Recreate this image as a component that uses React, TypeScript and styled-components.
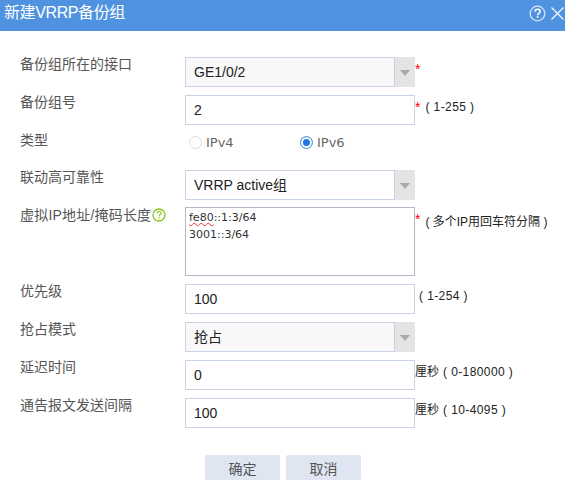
import { ReactNode } from 'react';
import styled, { createGlobalStyle } from 'styled-components';

const GlobalStyle = createGlobalStyle`
  html, body {
    margin: 0;
    padding: 0;
    background: #fff;
    font-family: "Liberation Sans", "Noto Sans CJK SC", sans-serif;
  }
`;

type RowProps = {
  label: ReactNode;
  children: ReactNode;
  gap?: number;
};

const FormRow = ({ label, children, gap = 8 }: RowProps) => (
  <Row $gap={gap}>
    <Label>{label}</Label>
    {children}
  </Row>
);

const SelectBox = ({ value, tone }: { value: string; tone?: string }) => (
  <Select>
    <SelectValue $tone={tone}>{value}</SelectValue>
    <SelectArrow>
      <ArrowGlyph />
    </SelectArrow>
  </Select>
);

const App = () => {
  return (
    <Dialog>
      <GlobalStyle />
      <Header>
        <Title>新建VRRP备份组</Title>
        <HeaderIcons>
          <svg width="17" height="17" viewBox="0 0 17 17" fill="none">
            <circle cx="8.5" cy="8.5" r="7.3" stroke="#d5e6f8" strokeWidth="1.3" />
            <path d="M6 6.7c0-1.5 1.1-2.4 2.6-2.4s2.5.9 2.5 2.1c0 1.9-2.5 1.9-2.5 3.8" stroke="#fff" strokeWidth="1.5" />
            <rect x="7.8" y="11.2" width="1.6" height="1.7" fill="#fff" />
          </svg>
          <svg width="15" height="15" viewBox="0 0 15 15" fill="none">
            <path d="M1.5 1.5l12 12M13.5 1.5l-12 12" stroke="#fff" strokeWidth="1.1" />
          </svg>
        </HeaderIcons>
      </Header>
      <Form>
        <FormRow label="备份组所在的接口">
          <SelectBox value="GE1/0/2" tone="#f8f8f8" />
          <Hint><Star>*</Star></Hint>
        </FormRow>
        <FormRow label="备份组号">
          <TextInput readOnly value="2" />
          <Hint><Star>*</Star><Range $left={5}>( 1-255 )</Range></Hint>
        </FormRow>
        <FormRow label="类型">
          <RadioGroup>
            <RadioItem>
              <RadioDot />
              <RadioText>IPv4</RadioText>
            </RadioItem>
            <RadioItem>
              <RadioDot $checked />
              <RadioText>IPv6</RadioText>
            </RadioItem>
          </RadioGroup>
        </FormRow>
        <FormRow label="联动高可靠性" gap={7}>
          <SelectBox value="VRRP active组" />
        </FormRow>
        <FormRow
          label={
            <>
              <TipLabel>虚拟IP地址/掩码长度</TipLabel>
              <TipIcon viewBox="0 0 14 14" fill="none">
                <circle cx="7" cy="7" r="6" stroke="#8cc21f" strokeWidth="1.3" />
                <path d="M5 5.4c0-1.2.9-1.9 2.1-1.9s2 .7 2 1.7c0 1.5-2 1.5-2 3" stroke="#8cc21f" strokeWidth="1.2" />
                <rect x="6.4" y="9.3" width="1.3" height="1.4" fill="#8cc21f" />
              </TipIcon>
            </>
          }
        >
          <AddressArea>
            <Misspelled>fe80</Misspelled>::1:3/64
            <br />
            3001::3/64
          </AddressArea>
          <Hint><Star>*</Star><WideRange>( 多个IP用回车符分隔 )</WideRange></Hint>
        </FormRow>
        <FormRow label="优先级">
          <TextInput readOnly value="100" />
          <Hint><Range $left={4}>( 1-254 )</Range></Hint>
        </FormRow>
        <FormRow label="抢占模式">
          <SelectBox value="抢占" tone="#f8f8f8" />
        </FormRow>
        <FormRow label="延迟时间">
          <TextInput readOnly value="0" />
          <Hint>厘秒<Range $left={4}>( 0-180000 )</Range></Hint>
        </FormRow>
        <FormRow label="通告报文发送间隔" gap={0}>
          <TextInput readOnly value="100" />
          <Hint>厘秒<Range $left={4}>( 10-4095 )</Range></Hint>
        </FormRow>
      </Form>
      <Footer>
        <ActionButton>确定</ActionButton>
        <ActionButton>取消</ActionButton>
      </Footer>
    </Dialog>
  );
};

const Dialog = styled.div`
  width: 565px;
  height: 482px;
  overflow: hidden;
  background: #fff;
`;
const Header = styled.div`
  height: 31px;
  background: #4f93e0;
  display: flex;
  align-items: center;
  justify-content: space-between;
  padding: 0 0 0 4px;
  margin-bottom: 26px;
`;
const Title = styled.div`
  color: #fff;
  font-size: 16px;
  line-height: 22px;
  margin-top: -6px;
  letter-spacing: -0.4px;
`;
const HeaderIcons = styled.div`
  display: flex;
  align-items: center;
  gap: 4px;
  margin-top: -5px;
`;
const Form = styled.div`
  display: flex;
  flex-direction: column;
  padding-left: 20px;
`;
const Row = styled.div<{ $gap: number }>`
  display: flex;
  align-items: flex-start;
  margin-bottom: ${(p) => p.$gap}px;
`;
const Label = styled.div`
  width: 165px;
  flex: none;
  display: flex;
  align-items: center;
  color: #555;
  font-size: 14px;
  line-height: 14px;
`;
const TipLabel = styled.span`
  letter-spacing: 0.2px;
`;
const TipIcon = styled.svg`
  width: 14px;
  height: 14px;
  margin: 1px 0 0 1px;
`;
const Select = styled.div`
  width: 230px;
  height: 30px;
  display: flex;
  flex: none;
`;
const SelectValue = styled.div<{ $tone?: string }>`
  flex: 1;
  box-sizing: border-box;
  border: 1px solid #c8d4e6;
  background: ${(p) => p.$tone || '#fff'};
  padding-left: 8px;
  color: #222;
  font-size: 14px;
  line-height: 29px;
`;
const SelectArrow = styled.div`
  width: 20px;
  background: #e4e4e4;
  display: flex;
  align-items: center;
  justify-content: center;
`;
const ArrowGlyph = styled.span`
  width: 0;
  height: 0;
  border-left: 5px solid transparent;
  border-right: 5px solid transparent;
  border-top: 6px solid #a8a8a8;
  margin-top: 1px;
`;
const TextInput = styled.input`
  width: 230px;
  height: 30px;
  flex: none;
  box-sizing: border-box;
  border: 1px solid #c8d4e6;
  outline: none;
  padding: 0 0 0 8px;
  margin: 0;
  background: #fff;
  color: #222;
  font-family: inherit;
  font-size: 14px;
`;
const AddressArea = styled.div`
  width: 230px;
  height: 69px;
  flex: none;
  box-sizing: border-box;
  border: 1px solid #b4b7c8;
  padding: 1px 3px;
  color: #333;
  font-family: "DejaVu Sans", sans-serif;
  font-size: 11px;
  line-height: 17px;
`;
const Misspelled = styled.span`
  text-decoration: underline wavy #e33;
  text-decoration-thickness: 1px;
`;
const Hint = styled.div`
  color: #222;
  font-size: 12px;
  line-height: 18px;
  padding-top: 3px;
  white-space: nowrap;
  display: flex;
  align-items: flex-start;
`;
const Star = styled.span`
  color: #f00;
  font-size: 14px;
`;
const Range = styled.span<{ $left: number }>`
  margin-left: ${(p) => p.$left}px;
  letter-spacing: 0.4px;
`;
const WideRange = styled.span`
  margin: 3px 0 0 5px;
`;
const RadioGroup = styled.div`
  width: 230px;
  height: 29px;
  display: flex;
  align-items: center;
  gap: 26px;
  padding: 0 0 11px 4px;
  box-sizing: border-box;
`;
const RadioItem = styled.div`
  display: flex;
  align-items: center;
  gap: 4px;
  width: 85px;
`;
const RadioDot = styled.span<{ $checked?: boolean }>`
  width: 13px;
  height: 13px;
  box-sizing: border-box;
  border-radius: 50%;
  border: 1px solid ${(p) => (p.$checked ? '#5a9ae0' : '#ddd')};
  background: ${(p) => (p.$checked ? '#1f78e0' : '#fff')};
  box-shadow: ${(p) => (p.$checked ? 'inset 0 0 0 2px #fff' : 'none')};
`;
const RadioText = styled.span`
  color: #666;
  font-family: "DejaVu Sans", sans-serif;
  font-size: 13px;
`;
const Footer = styled.div`
  display: flex;
  justify-content: flex-start;
  gap: 6px;
  padding: 27px 0 0 205px;
`;
const ActionButton = styled.button`
  width: 75px;
  height: 25px;
  border: none;
  border-radius: 2px;
  padding: 0;
  background: #dfe5f1;
  color: #555;
  font-family: inherit;
  font-size: 14px;
`;

export default App;
